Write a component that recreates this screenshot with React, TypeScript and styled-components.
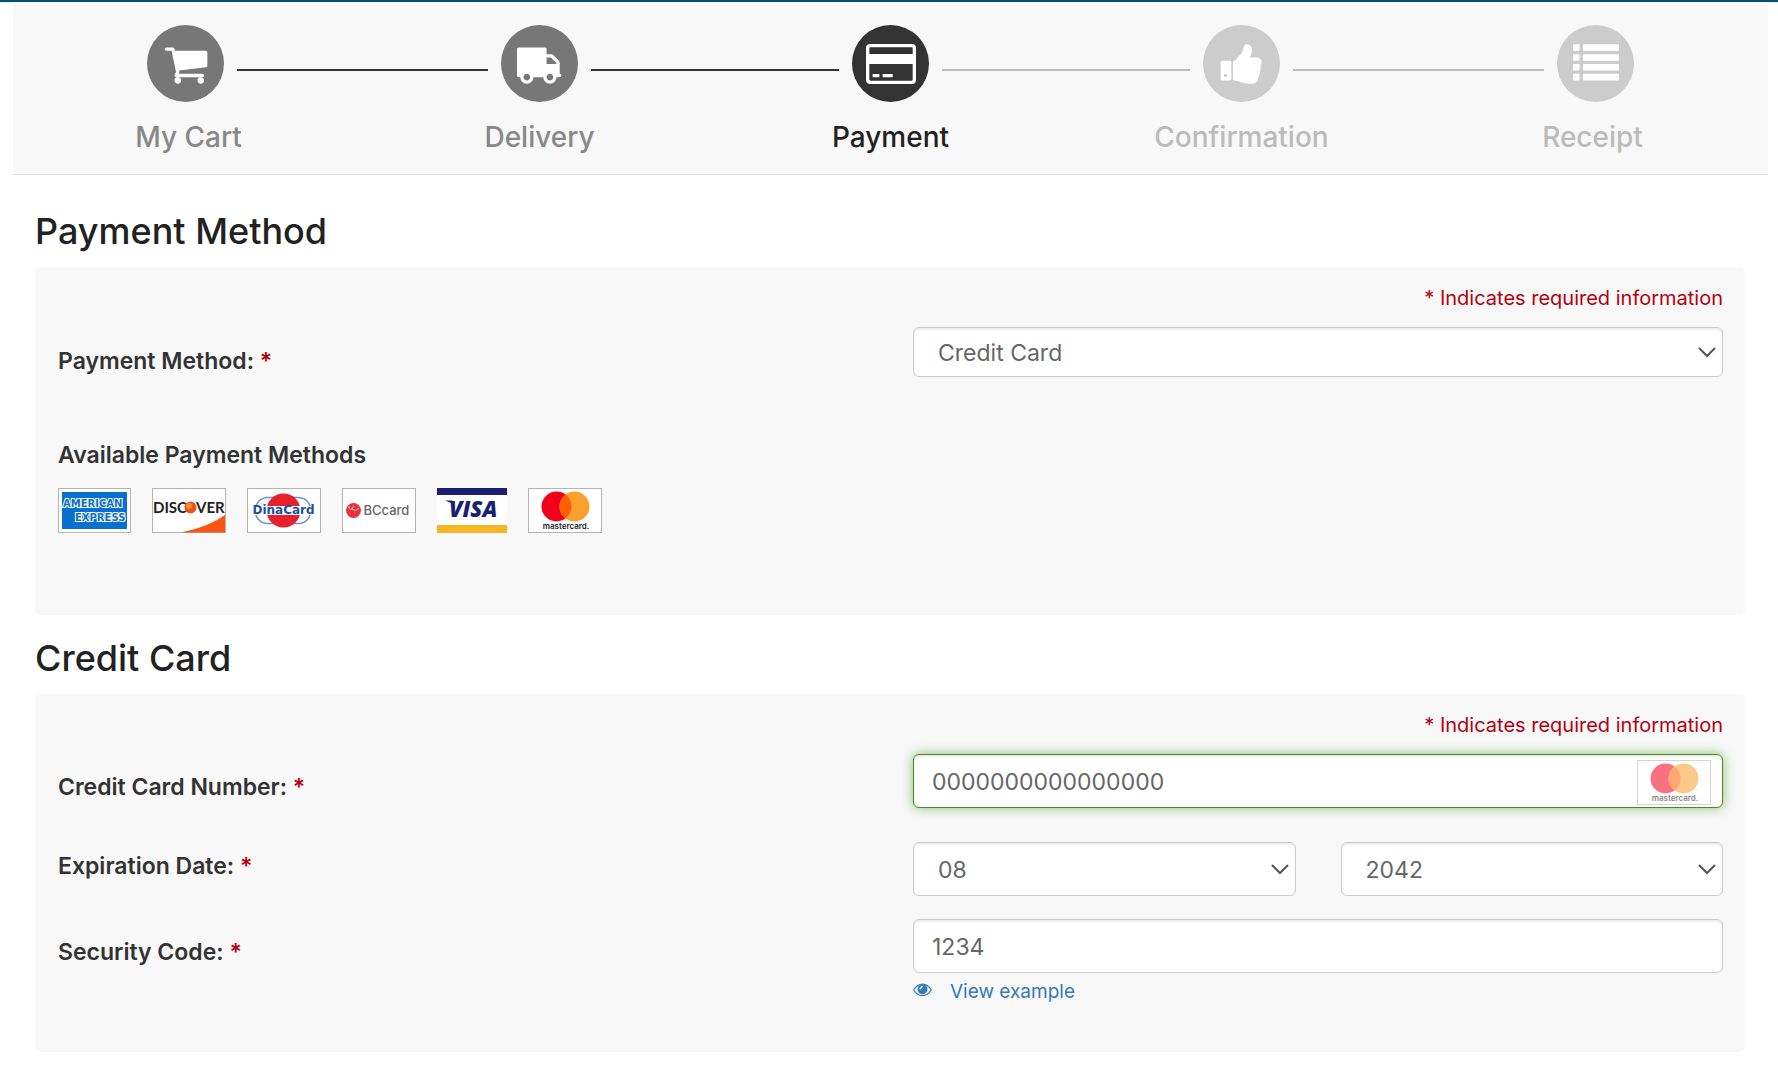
import React, { useState } from "react";
import styled, { createGlobalStyle } from "styled-components";

const GlobalStyle = createGlobalStyle`
  *, *::before, *::after { box-sizing: border-box; }
  body {
    margin: 0;
    background: #fff;
    color: #333;
    font-family: Inter, "Liberation Sans", sans-serif;
    font-size: 23px;
    line-height: 32px;
  }
  h1, h2, h3, p, ol, ul { margin: 0; padding: 0; }
  ol, ul { list-style: none; }
  svg { display: block; }
`;

/* ---------- progress steps ---------- */

const TopRule = styled.div`
  height: 3px;
  background: #00527e;
  border-bottom: 1px solid #fdf6c8;
`;

const Page = styled.div`
  padding: 1px 10px 0 13px;
`;

const Steps = styled.ol`
  display: grid;
  grid-template-columns: repeat(5, 1fr);
  padding: 21px 0 17px;
  background: #f8f8f8;
  border-bottom: 1px solid #ddd;
`;

type StepState = "done" | "current" | "todo";

const circleColor = { done: "#777", current: "#333", todo: "#ccc" };
const labelColor = { done: "#888", current: "#222", todo: "#bbb" };

const Step = styled.li`
  display: flex;
  flex-direction: column;
  gap: 15px;
`;

const Track = styled.div`
  display: flex;
  align-items: center;
`;

const Circle = styled.span<{ $state: StepState }>`
  display: flex;
  flex: none;
  align-items: center;
  justify-content: center;
  width: 77px;
  height: 77px;
  border-radius: 50%;
  background: ${(p) => circleColor[p.$state]};
  color: #fff;
`;

const Connector = styled.span<{ $tone: "dark" | "light" | "none"; $side: "left" | "right" }>`
  flex: 1;
  height: 2px;
  margin-top: 13px;
  margin-${(p) => (p.$side === "left" ? "right" : "left")}: ${(p) => (p.$tone === "none" ? 7 : 13)}px;
  background: ${(p) => ({ dark: "#333", light: "#bbb", none: "transparent" })[p.$tone]};
`;

const StepLabel = styled.span<{ $state: StepState }>`
  color: ${(p) => labelColor[p.$state]};
  font-size: 28px;
  font-weight: 500;
  line-height: 40px;
  text-align: center;
`;

/* ---------- sections ---------- */

const Form = styled.form`
  padding: 13px 23px 22px 22px;
`;

const Heading = styled.h2`
  margin: 21px 0 14px;
  color: #222;
  font-size: 36px;
  font-weight: 500;
  line-height: 44px;
`;

const Panel = styled.div<{ $bottom: number }>`
  padding: 16px 22px ${(p) => p.$bottom}px 23px;
  border-radius: 6px;
  background: #f8f8f8;
`;

const RequiredNote = styled.p`
  margin-bottom: 14px;
  color: #b5000f;
  font-size: 20px;
  line-height: 30px;
  text-align: right;
`;

const Row = styled.div<{ $gap?: number }>`
  display: grid;
  grid-template-columns: 1fr 1fr;
  column-gap: 45px;
  margin-top: ${(p) => p.$gap ?? 0}px;
`;

const Label = styled.label<{ $top: number }>`
  padding-top: ${(p) => p.$top}px;
  font-weight: 600;
`;

const Star = styled.span`
  color: #b5000f;
`;

const Pair = styled.div`
  display: grid;
  grid-template-columns: 1fr 1fr;
  column-gap: 45px;
`;

const control = `
  display: block;
  width: 100%;
  border: 1px solid #ccc;
  border-radius: 6px;
  background: #fff;
  box-shadow: inset 0 2px 2px rgba(0, 0, 0, 0.075);
  color: #666;
  font: inherit;
  outline: none;
`;

const ControlBox = styled.div`
  position: relative;
`;

const Select = styled.select<{ $height: number }>`
  ${control}
  height: ${(p) => p.$height}px;
  padding: 2px 40px 0 24px;
  appearance: none;
`;

const Arrow = styled.svg`
  position: absolute;
  top: 50%;
  right: 7px;
  margin-top: -5px;
  pointer-events: none;
`;

const Input = styled.input<{ $valid?: boolean }>`
  ${control}
  height: 54px;
  padding: 1px 18px 0;
  ${(p) =>
    p.$valid &&
    `
    border-color: #458b1d;
    box-shadow: inset 0 2px 2px rgba(0, 0, 0, 0.075), 0 0 12px rgba(69, 150, 29, 0.6);
  `}
`;

const CardBadge = styled.span`
  position: absolute;
  top: 6px;
  right: 12px;
  opacity: 0.55;
`;

const Subheading = styled.h3`
  margin: 62px 0 17px;
  font-size: 23px;
  font-weight: 600;
  line-height: 32px;
`;

const Cards = styled.ul`
  display: flex;
  gap: 21px;
`;

const ExampleLink = styled.a`
  display: flex;
  gap: 18px;
  width: fit-content;
  margin-top: 4px;
  color: #337ab7;
  font-size: 19px;
  line-height: 30px;
  text-decoration: none;

  svg { margin-top: 6px; }
`;

/* ---------- icons ---------- */

const Glyph = ({ children }: { children: React.ReactNode }) => (
  <svg width="46" height="46" viewBox="0 0 1792 1792" fill="currentColor" aria-hidden="true">
    {children}
  </svg>
);

const CartIcon = () => (
  <Glyph>
    <path d="M704 1536q0 52-38 90t-90 38-90-38-38-90 38-90 90-38 90 38 38 90zm896 0q0 52-38 90t-90 38-90-38-38-90 38-90 90-38 90 38 38 90zm128-1088v512q0 24-16.500 42.500t-40.500 21.500l-1044 122q13 60 13 70 0 16-24 64h920q26 0 45 19t19 45-19 45-45 19h-1024q-26 0-45-19t-19-45q0-11 8-31.500t16-36 21.500-40 15.500-29.500l-177-823h-204q-26 0-45-19t-19-45 19-45 45-19h256q16 0 28.500 6.500t19.500 15.500 13 24.500 8 26 5 29.500 4.500 26h1201q26 0 45 19t19 45z" />
  </Glyph>
);

const TruckIcon = () => (
  <Glyph>
    <g transform="matrix(-1 0 0 1 1792 0)">
      <path d="M640 1408q0-52-38-90t-90-38-90 38-38 90 38 90 90 38 90-38 38-90zm-384-512h384v-256h-158q-13 0-22 9l-195 195q-9 9-9 22v30zm1280 512q0-52-38-90t-90-38-90 38-38 90 38 90 90 38 90-38 38-90zm256-1088v1024q0 15-4 26.500t-13.500 18.500-16.500 11.500-23.500 6-22.500 2-25.500 0-22.500-.5q0 106-75 181t-181 75-181-75-75-181h-384q0 106-75 181t-181 75-181-75-75-181h-64q-3 0-22.500.5t-25.500 0-22.500-2-23.500-6-16.500-11.500-13.500-18.500-4-26.500q0-26 19-45t45-19v-320q0-8-.5-35t0-38 2.500-34.500 6.500-37 14-30.500 22.500-30l198-198q19-19 50.500-32t58.500-13h160v-192q0-26 19-45t45-19h1024q26 0 45 19t19 45z" />
    </g>
  </Glyph>
);

const CardIcon = () => (
  <svg width="50" height="40" viewBox="0 0 1920 1536" fill="currentColor" aria-hidden="true">
    <path
      fillRule="evenodd"
      d="M160 0H1760Q1920 0 1920 160V1376Q1920 1536 1760 1536H160Q0 1536 0 1376V160Q0 0 160 0ZM160 128Q128 128 128 160V384H1792V160Q1792 128 1760 128ZM128 768V1376Q128 1408 160 1408H1760Q1792 1408 1792 1376V768ZM256 1152H512V1280H256ZM640 1152H1024V1280H640Z"
    />
  </svg>
);

const ThumbIcon = () => (
  <Glyph>
    <path d="M320 1344q0-26-19-45t-45-19q-27 0-45.500 19t-18.500 45q0 27 18.500 45.500t45.500 18.500q26 0 45-18.500t19-45.500zm160-512v640q0 26-19 45t-45 19h-288q-26 0-45-19t-19-45v-640q0-26 19-45t45-19h288q26 0 45 19t19 45zm1184 0q0 86-55 149 15 44 15 76 3 76-43 137 17 56 0 117-15 57-54 94 9 112-49 181-64 76-197 78h-129q-66 0-144-15.500t-121.500-29-120.500-39.500q-123-43-158-44-26-1-45-19.500t-19-44.500v-641q0-25 18-43.500t43-20.500q24-2 76-59t101-121q68-87 101-120 18-18 31-48t17.500-48.500 13.500-60.500q7-39 12.500-61t19.500-52 34-50q19-19 45-19 46 0 82.500 10.500t60 26 40 40.500 24 45 12 50 5 45 .5 39q0 38-9.500 76t-19 60-27.500 56q-3 6-10 18t-11 22-8 24h277q78 0 135 57t57 135z" />
  </Glyph>
);

const ListIcon = () => (
  <Glyph>
    {[128, 512, 896, 1280].map((y) => (
      <React.Fragment key={y}>
        <rect x="0" y={y} width="256" height="256" rx="32" />
        <rect x="384" y={y} width="1408" height="256" rx="32" />
      </React.Fragment>
    ))}
  </Glyph>
);

const EyeIcon = () => (
  <svg width="19" height="14" viewBox="0 0 19 14" fill="none" aria-hidden="true">
    <path
      d="M.8 7C3 3.200 6 1.200 9.500 1.200S16 3.200 18.200 7C16 10.800 13 12.600 9.500 12.600S3 10.800 .8 7Z"
      stroke="currentColor"
      strokeWidth="1.200"
    />
    <circle cx="9.500" cy="6.200" r="5" fill="currentColor" />
    <path d="M7.200 5.800L9 3.600" stroke="#f8f8f8" strokeWidth="1.500" strokeLinecap="round" />
  </svg>
);

/* ---------- card brands ---------- */

const sans = "Inter, 'Liberation Sans', sans-serif";
const wide = "'DejaVu Sans', sans-serif";

const CardArt = ({ name, width = 74, children }: { name: string; width?: number; children: React.ReactNode }) => (
  <svg width={width} height="45" viewBox={`0 0 ${width} 45`} role="img" aria-label={name}>
    <rect x="0.5" y="0.5" width={width - 1} height="44" fill="#fff" stroke="#b4b4b4" />
    {children}
  </svg>
);

const Amex = () => (
  <CardArt name="American Express" width={73}>
    <rect x="4" y="4" width="65" height="37" fill="#0871ce" />
    <g fill="#0871ce" stroke="#fff" strokeWidth="2" paintOrder="stroke" fontFamily={wide} fontWeight="700" fontSize="10">
      <text x="5" y="19">AMERICAN</text>
      <text x="17" y="33">EXPRESS</text>
    </g>
  </CardArt>
);

const Discover = () => (
  <CardArt name="Discover">
    <path d="M29 44.500C46 41 60 36 73 27V44.500Z" fill="#fb5412" />
    <g fill="#222" fontFamily="Lato, sans-serif" fontWeight="700" fontSize="15">
      <text x="1" y="25">DISC</text>
      <text x="44" y="25">VER</text>
    </g>
    <circle cx="38.500" cy="19.500" r="6" fill="#e8541a" />
    <circle cx="37" cy="18" r="3" fill="#f58a3c" />
  </CardArt>
);

const Dina = () => (
  <CardArt name="DinaCard">
    <rect x="8.500" y="9.500" width="29" height="26" rx="12" fill="none" stroke="#6d8fc5" strokeWidth="1.500" />
    <rect x="34.500" y="9.500" width="29" height="26" rx="12" fill="none" stroke="#6d8fc5" strokeWidth="1.500" />
    <circle cx="36.500" cy="22.500" r="17" fill="#e8202a" />
    <rect x="4" y="18" width="65" height="9" fill="#fff" />
    <text x="36.500" y="26" textAnchor="middle" fill="#1f4f9f" fontFamily={wide} fontWeight="700" fontSize="12">
      DinaCard
    </text>
  </CardArt>
);

const BCCard = () => (
  <CardArt name="BC card">
    <circle cx="11.500" cy="22.500" r="7.500" fill="#e8323e" />
    <path d="M7 18Q7 22 10 21Q11 18 12 18M10 21Q14 24 17 20" fill="none" stroke="#fff" strokeOpacity="0.7" />
    <text x="21.500" y="27" fill="#666" fontFamily={sans} fontWeight="500" fontSize="13">
      BCcard
    </text>
  </CardArt>
);

const Visa = () => (
  <svg width="70" height="45" viewBox="0 0 70 45" role="img" aria-label="Visa">
    <rect width="70" height="45" fill="#fff" />
    <rect width="70" height="7" fill="#1a1f71" />
    <rect y="37" width="70" height="8" fill="#f7b624" />
    <path d="M8 12.500H15L16.500 16Z" fill="#1a1f71" />
    <text x="12" y="29" fill="#1a1f71" fontFamily="'Open Sans', sans-serif" fontStyle="italic" fontWeight="800" fontSize="22">
      VISA
    </text>
  </svg>
);

const Mastercard = () => (
  <CardArt name="Mastercard">
    <circle cx="28.500" cy="18.500" r="15" fill="#f2001b" />
    <circle cx="46.500" cy="18.500" r="15" fill="#f9a02d" />
    <path d="M37.500 6.500A15 15 0 0 1 37.500 30.500A15 15 0 0 1 37.500 6.500Z" fill="#ff5f00" />
    <text x="38" y="40.500" textAnchor="middle" fill="#222" fontFamily={sans} fontWeight="600" fontSize="8">
      mastercard.
    </text>
  </CardArt>
);

const brands = [Amex, Discover, Dina, BCCard, Visa, Mastercard];

/* ---------- page ---------- */

const steps: { label: string; state: StepState; icon: React.ReactNode }[] = [
  { label: "My Cart", state: "done", icon: <CartIcon /> },
  { label: "Delivery", state: "done", icon: <TruckIcon /> },
  { label: "Payment", state: "current", icon: <CardIcon /> },
  { label: "Confirmation", state: "todo", icon: <ThumbIcon /> },
  { label: "Receipt", state: "todo", icon: <ListIcon /> },
];

const SelectBox = ({
  id,
  label,
  options,
  initial,
  height = 54,
}: {
  id: string;
  label?: string;
  options: string[];
  initial: string;
  height?: number;
}) => (
  <ControlBox>
    <Select id={id} aria-label={label} defaultValue={initial} $height={height}>
      {options.map((o) => (
        <option key={o}>{o}</option>
      ))}
    </Select>
    <Arrow width="18" height="11" viewBox="0 0 18 11" fill="none" aria-hidden="true">
      <path d="M1.500 1.500L9 9L16.500 1.500" stroke="#555" strokeWidth="2" strokeLinecap="round" />
    </Arrow>
  </ControlBox>
);

const months = Array.from({ length: 12 }, (_, i) => String(i + 1).padStart(2, "0"));
const years = Array.from({ length: 20 }, (_, i) => String(2025 + i));

export default function App() {
  const [number, setNumber] = useState("0000000000000000");
  const [code, setCode] = useState("1234");

  return (
    <>
      <GlobalStyle />
      <TopRule />
      <Page>
        <Steps>
          {steps.map((s, i) => (
            <Step key={s.label} aria-current={s.state === "current" ? "step" : undefined}>
              <Track>
                <Connector $side="left" $tone={i === 0 ? "none" : i <= 2 ? "dark" : "light"} />
                <Circle $state={s.state}>{s.icon}</Circle>
                <Connector $side="right" $tone={i === 4 ? "none" : i < 2 ? "dark" : "light"} />
              </Track>
              <StepLabel $state={s.state}>{s.label}</StepLabel>
            </Step>
          ))}
        </Steps>

        <Form onSubmit={(e) => e.preventDefault()}>
          <Heading>Payment Method</Heading>
          <Panel $bottom={82}>
            <RequiredNote>* Indicates required information</RequiredNote>
            <Row>
              <Label htmlFor="method" $top={18}>
                Payment Method: <Star>*</Star>
              </Label>
              <SelectBox id="method" options={["Credit Card"]} initial="Credit Card" height={50} />
            </Row>
            <Subheading>Available Payment Methods</Subheading>
            <Cards>
              {brands.map((Brand, i) => (
                <li key={i}>
                  <Brand />
                </li>
              ))}
            </Cards>
          </Panel>

          <Heading>Credit Card</Heading>
          <Panel $bottom={45}>
            <RequiredNote>* Indicates required information</RequiredNote>
            <Row>
              <Label htmlFor="number" $top={17}>
                Credit Card Number: <Star>*</Star>
              </Label>
              <ControlBox>
                <Input id="number" $valid value={number} onChange={(e) => setNumber(e.target.value)} />
                <CardBadge>
                  <Mastercard />
                </CardBadge>
              </ControlBox>
            </Row>
            <Row $gap={34}>
              <Label htmlFor="month" $top={8}>
                Expiration Date: <Star>*</Star>
              </Label>
              <Pair>
                <SelectBox id="month" options={months} initial="08" />
                <SelectBox id="year" label="Expiration year" options={years} initial="2042" />
              </Pair>
            </Row>
            <Row $gap={23}>
              <Label htmlFor="code" $top={17}>
                Security Code: <Star>*</Star>
              </Label>
              <div>
                <Input id="code" value={code} onChange={(e) => setCode(e.target.value)} />
                <ExampleLink href="#example">
                  <EyeIcon />
                  View example
                </ExampleLink>
              </div>
            </Row>
          </Panel>
        </Form>
      </Page>
    </>
  );
}
